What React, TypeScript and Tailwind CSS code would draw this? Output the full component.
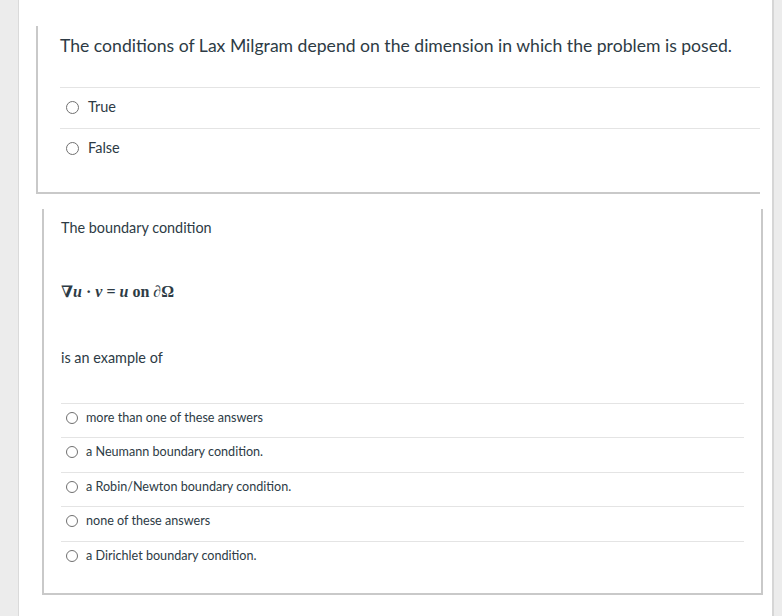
import React from 'react';

const font = { fontFamily: 'Lato, "Noto Sans", "Liberation Sans", sans-serif' };

function Radio({ size }: { size: 'lg' | 'sm' }) {
  return (
    <span
      className={
        size === 'lg'
          ? 'inline-block w-[13px] h-[13px] rounded-full border-[1.5px] border-[#707070] shrink-0'
          : 'inline-block w-[12px] h-[12px] rounded-full border-[1.5px] border-[#707070] shrink-0'
      }
    />
  );
}

const answers = [
  'more than one of these answers',
  'a Neumann boundary condition.',
  'a Robin/Newton boundary condition.',
  'none of these answers',
  'a Dirichlet boundary condition.',
];

export default function App() {
  return (
    <div className="w-[782px] h-[616px] bg-white flex overflow-hidden text-[#2d3b45]" style={font}>
      <div className="w-[19px] h-full bg-[#ececec] border-r border-[#dadada] shrink-0" />

      <div className="flex-1 flex flex-col">
        {/* question 1 */}
        <div className="mt-[26px] ml-[17px] mr-[12px] border-l-2 border-b-2 border-[#c9c9c9] pl-[22px] pb-[23px]">
          <p className="pt-[10px] text-[17.6px] leading-[20px]">
            The conditions of Lax Milgram depend on the dimension in which the problem is posed.
          </p>
          <div className="mt-[31px]">
            {['True', 'False'].map((a) => (
              <div
                key={a}
                className="border-t border-[#e4e4e4] pt-[9px] pb-[11px] pl-[6px] flex items-center gap-[9px] text-[14.5px] leading-[20px]"
              >
                <Radio size="lg" />
                <span>{a}</span>
              </div>
            ))}
          </div>
        </div>

        {/* question 2 */}
        <div className="mt-[15px] ml-[23px] mr-[9px] border-l-2 border-r-2 border-b-2 border-[#c9c9c9] pl-[17px] pr-[17px] pb-[18px]">
          <p className="pt-[9px] text-[14.4px] leading-[20px]">The boundary condition</p>
          <p
            className="mt-[44px] text-[16px] leading-[20px] font-semibold"
            style={{ fontFamily: '"Liberation Serif", "DejaVu Serif", serif' }}
          >
            ∇<i>u</i> · <i>ν</i> = <i>u</i> on <i>∂</i>Ω
          </p>
          <p className="mt-[46px] text-[14.4px] leading-[20px]">is an example of</p>
          <div className="mt-[35px]">
            {answers.map((a, i) => (
              <div
                key={a}
                className={
                  'border-t border-[#e4e4e4] pt-[5px] pl-[5px] flex items-center gap-[8px] text-[12.6px] leading-[18px] ' +
                  (i % 2 === 0 ? 'pb-[10px]' : 'pb-[11px]')
                }
              >
                <Radio size="sm" />
                <span>{a}</span>
              </div>
            ))}
          </div>
        </div>
      </div>

      <div className="w-[10px] h-full bg-[#ececec] border-l-2 border-[#d6d6d6] shrink-0" />
    </div>
  );
}
